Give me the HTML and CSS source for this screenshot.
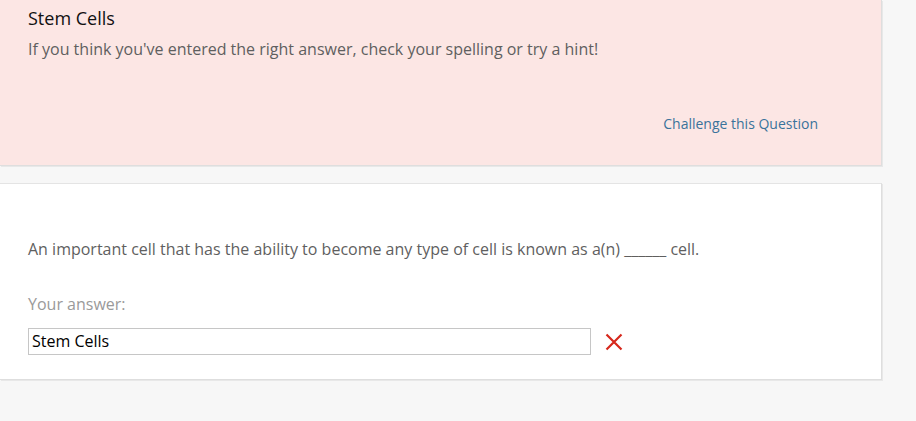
FILE: index.html
```html
<!DOCTYPE html>
<html>
<head>
<meta charset="utf-8">
<link rel="stylesheet" href="styles.css">
</head>
<body>
<div class="page">
  <section class="feedback">
    <div class="feedback-title">Stem Cells</div>
    <p class="feedback-hint">If you think you've entered the right answer, check your spelling or try a hint!</p>
    <div class="challenge-row"><a class="challenge" href="#">Challenge this Question</a></div>
  </section>
  <section class="question-card">
    <p class="question">An important cell that has the ability to become any type of cell is known as a(n) ______ cell.</p>
    <div class="answer-label">Your answer:</div>
    <div class="answer-row">
      <div class="answer-input">Stem Cells</div>
      <svg class="wrong" width="18" height="18" viewBox="0 0 18 18"><path d="M1.5 1.5 L16.5 16.5 M16.5 1.5 L1.5 16.5" stroke="#d6281c" stroke-width="2.2" fill="none"/></svg>
    </div>
  </section>
</div>
</body>
</html>
```
FILE: styles.css
```css
html, body {
  margin: 0;
  padding: 0;
  background: #f7f7f7;
}
.page {
  font-family: "Open Sans", "Source Sans Pro", sans-serif;
  height: 421px;
  overflow: hidden;
  background: #f7f7f7;
}
.feedback {
  box-sizing: border-box;
  width: 882px;
  height: 166px;
  background: #fce6e4;
  border-right: 1px solid #dedede;
  border-bottom: 1px solid #dedede;
  box-shadow: 1px 1px 0 #e8e8e8;
  padding: 6px 0 0 28px;
}
.feedback-title {
  font-size: 18px;
  line-height: 24px;
  color: #111;
}
.feedback-hint {
  margin: 8px 0 0;
  font-size: 16px;
  line-height: 22px;
  color: #5f5f5f;
}
.challenge-row {
  display: flex;
  justify-content: flex-end;
  padding-right: 63px;
  margin-top: 54px;
}
.challenge {
  font-size: 14px;
  line-height: 20px;
  color: #3a739b;
  text-decoration: none;
}
.question-card {
  box-sizing: border-box;
  margin-top: 17px;
  width: 882px;
  height: 197px;
  background: #fff;
  border-right: 1px solid #dedede;
  border-bottom: 1px solid #dedede;
  border-top: 1px solid #e4e4e4;
  box-shadow: 1px 1px 0 #e8e8e8;
  padding: 54px 0 0 28px;
}
.question {
  margin: 0;
  font-size: 16px;
  line-height: 22px;
  color: #5f5f5f;
}
.answer-label {
  margin-top: 33px;
  font-size: 16px;
  line-height: 22px;
  color: #9a9a9a;
}
.answer-row {
  display: flex;
  align-items: center;
  margin-top: 13px;
}
.answer-input {
  box-sizing: border-box;
  width: 563px;
  height: 27px;
  border: 1px solid #c6c6c6;
  padding: 0 3px;
  font-size: 16px;
  line-height: 25px;
  color: #000;
}
.wrong {
  margin-left: 14px;
}
```
